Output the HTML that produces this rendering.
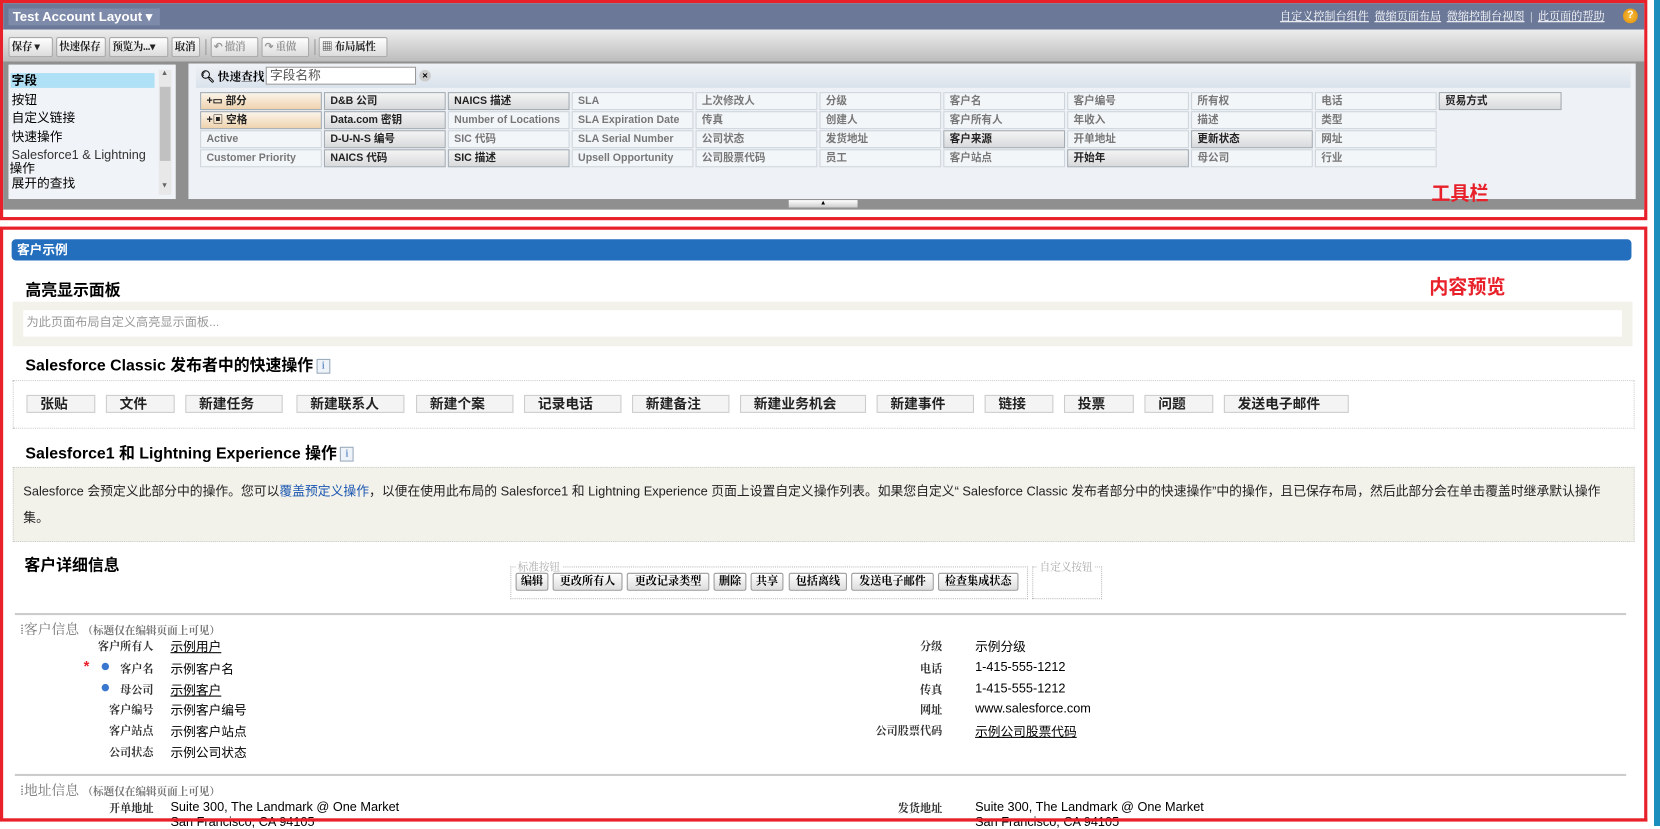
<!DOCTYPE html>
<html><head><meta charset="utf-8"><style>
*{margin:0;padding:0;box-sizing:border-box}
html,body{width:1660px;height:826px;overflow:hidden;background:#fff}
body{font-family:"Liberation Sans","Noto Sans CJK SC",sans-serif;color:#000}
#w{position:absolute;left:0;top:0;width:1568px;height:780px;transform:scale(1.0587);transform-origin:0 0}
.a{position:absolute}
.sr{font-family:"Liberation Serif","Noto Serif CJK SC",serif}
.cell{position:absolute;height:17px;border:1px solid #cdd5dc;background:#f3f6f9;font-size:10px;color:#777;line-height:15px;padding-left:5px;white-space:nowrap;overflow:hidden;font-weight:bold}
.cell.b{background:linear-gradient(#f4f4f4,#d8dadc);border-color:#a3acb3;color:#222}
.cell.o{background:linear-gradient(#fbf4ea,#efd3ae);border-color:#a3acb3;color:#222}
.tb{position:absolute;top:35px;height:19px;border:1px solid #aaa;background:linear-gradient(#fff,#dcdcdc);font-size:10px;line-height:17px;padding:0 2px;font-weight:bold;color:#222;border-radius:2px;font-family:"Liberation Serif","Noto Serif CJK SC",serif;white-space:nowrap;overflow:hidden;letter-spacing:-0.3px}
.qa{position:absolute;top:373px;height:17px;border:1px solid #ccc;background:#f4f4f4;font-size:13px;line-height:15px;padding-left:12px;font-weight:bold;color:#222}
.sb{position:absolute;top:541px;height:17px;border:1px solid #999;background:linear-gradient(#fff,#ddd);font-size:10.5px;line-height:15px;text-align:center;font-weight:bold;border-radius:2px;font-family:"Liberation Serif","Noto Serif CJK SC",serif;white-space:nowrap}
.lbl{position:absolute;font-size:10.5px;color:#333;text-align:right;font-family:"Liberation Serif","Noto Serif CJK SC",serif;font-weight:bold;width:130px}
.val{position:absolute;font-size:12px;color:#000}
.u{text-decoration:underline}
.hd{position:absolute;font-size:15px;font-weight:bold}
.info{display:inline-block;width:13px;height:14px;border:1px solid #9ab;background:#eef3fa;color:#2a62b0;font-size:10px;line-height:12px;text-align:center;vertical-align:2px;margin-left:3px;font-family:"Liberation Serif",serif;font-weight:normal}
</style></head><body>
<div class="a" style="left:1654px;top:0;width:6px;height:826px;background:#1a8fbd"></div>
<div id="w">
<div class="a" style="left:0;top:0;width:1556px;height:208px;border:3px solid #e8202a"></div>
<div class="a" style="left:3px;top:3px;width:1550px;height:25px;background:#6b7898"></div>
<div class="a" style="left:8px;top:8px;width:143px;height:16px;background:#7d8aaa;color:#fff;font-weight:bold;font-size:12.5px;line-height:16px;padding-left:4px">Test Account Layout ▾</div>
<div class="a sr" style="left:1209px;top:8px;color:#fff;font-size:10.5px;white-space:nowrap"><span class="u">自定义控制台组件</span>&nbsp;&nbsp;<span class="u">微缩页面布局</span>&nbsp;&nbsp;<span class="u">微缩控制台视图</span>&nbsp;&nbsp;|&nbsp;&nbsp;<span class="u">此页面的帮助</span></div>
<div class="a" style="left:1533px;top:8px;width:14px;height:14px;border-radius:50%;background:radial-gradient(#f8c040,#e08a00);color:#fff;font-size:10px;font-weight:bold;text-align:center;line-height:14px">?</div>
<div class="a" style="left:3px;top:28px;width:1550px;height:30px;background:linear-gradient(#ededed,#bdbdbd)"></div>
<div class="tb" style="left:8px;width:42px">保存 ▾</div>
<div class="tb" style="left:53px;width:47px">快速保存</div>
<div class="tb" style="left:103px;width:56px">预览为...▾</div>
<div class="tb" style="left:162px;width:27px">取消</div>
<div class="a" style="left:194px;top:37px;width:1px;height:15px;background:#999"></div>
<div class="tb" style="left:199px;width:45px;color:#999">↶ 撤消</div>
<div class="tb" style="left:247px;width:45px;color:#999">↷ 重做</div>
<div class="a" style="left:297px;top:37px;width:1px;height:15px;background:#999"></div>
<div class="tb" style="left:301px;width:65px">▦ 布局属性</div>
<div class="a" style="left:3px;top:58px;width:1550px;height:140px;background:#8f8f8f"></div>
<div class="a" style="left:8px;top:61px;width:158px;height:127px;background:#f0f3f7"></div>
<div class="a" style="left:150px;top:66px;width:12px;height:118px;background:#e8e8e8"></div>
<div class="a" style="left:151px;top:82px;width:10px;height:70px;background:#c1c1c1"></div>
<div class="a" style="left:152px;top:66px;font-size:7px;color:#666">▲</div>
<div class="a" style="left:152px;top:172px;font-size:7px;color:#666">▼</div>
<div class="a" style="left:10px;top:69px;width:136px;height:14px;background:#aee0f6"></div>
<div class="a" style="left:11px;top:68px;font-size:12px;line-height:17.5px;width:138px">
<b>字段</b><br>按钮<br>自定义链接<br>快速操作<br><span style="color:#333">Salesforce1 &amp; Lightning</span><br><span style="line-height:12px;display:block;margin-top:-3px;margin-left:-2px">操作</span>展开的查找</div>
<div class="a" style="left:178px;top:60px;width:1367px;height:128px;background:#eef1f5"></div>
<div class="a" style="left:185px;top:62px;width:1355px;height:21px;background:linear-gradient(#eef1f5,#d9e2ec)"></div>
<div class="a" style="left:189px;top:64px;font-size:11px;font-weight:bold">🔍︎<span class="sr"> 快速查找</span></div>
<div class="a" style="left:251px;top:63px;width:142px;height:17px;background:#fff;border:1px solid #999;font-size:12px;color:#555;padding-left:3px;line-height:15px">字段名称</div>
<div class="a" style="left:396px;top:66px;width:11px;height:11px;border-radius:50%;background:#ccc;font-size:9px;text-align:center;line-height:11px;font-weight:bold">×</div>
<div class="cell o" style="left:189px;top:87px;width:115px">+▭ 部分</div>
<div class="cell b" style="left:306px;top:87px;width:115px">D&amp;B 公司</div>
<div class="cell b" style="left:423px;top:87px;width:115px">NAICS 描述</div>
<div class="cell" style="left:540px;top:87px;width:115px">SLA</div>
<div class="cell" style="left:657px;top:87px;width:115px">上次修改人</div>
<div class="cell" style="left:774px;top:87px;width:115px">分级</div>
<div class="cell" style="left:891px;top:87px;width:115px">客户名</div>
<div class="cell" style="left:1008px;top:87px;width:115px">客户编号</div>
<div class="cell" style="left:1125px;top:87px;width:115px">所有权</div>
<div class="cell" style="left:1242px;top:87px;width:115px">电话</div>
<div class="cell b" style="left:1359px;top:87px;width:116px">贸易方式</div>
<div class="cell o" style="left:189px;top:105px;width:115px">+▣ 空格</div>
<div class="cell b" style="left:306px;top:105px;width:115px">Data.com 密钥</div>
<div class="cell" style="left:423px;top:105px;width:115px">Number of Locations</div>
<div class="cell" style="left:540px;top:105px;width:115px">SLA Expiration Date</div>
<div class="cell" style="left:657px;top:105px;width:115px">传真</div>
<div class="cell" style="left:774px;top:105px;width:115px">创建人</div>
<div class="cell" style="left:891px;top:105px;width:115px">客户所有人</div>
<div class="cell" style="left:1008px;top:105px;width:115px">年收入</div>
<div class="cell" style="left:1125px;top:105px;width:115px">描述</div>
<div class="cell" style="left:1242px;top:105px;width:115px">类型</div>
<div class="cell" style="left:189px;top:123px;width:115px">Active</div>
<div class="cell b" style="left:306px;top:123px;width:115px">D-U-N-S 编号</div>
<div class="cell" style="left:423px;top:123px;width:115px">SIC 代码</div>
<div class="cell" style="left:540px;top:123px;width:115px">SLA Serial Number</div>
<div class="cell" style="left:657px;top:123px;width:115px">公司状态</div>
<div class="cell" style="left:774px;top:123px;width:115px">发货地址</div>
<div class="cell b" style="left:891px;top:123px;width:115px">客户来源</div>
<div class="cell" style="left:1008px;top:123px;width:115px">开单地址</div>
<div class="cell b" style="left:1125px;top:123px;width:115px">更新状态</div>
<div class="cell" style="left:1242px;top:123px;width:115px">网址</div>
<div class="cell" style="left:189px;top:141px;width:115px">Customer Priority</div>
<div class="cell b" style="left:306px;top:141px;width:115px">NAICS 代码</div>
<div class="cell b" style="left:423px;top:141px;width:115px">SIC 描述</div>
<div class="cell" style="left:540px;top:141px;width:115px">Upsell Opportunity</div>
<div class="cell" style="left:657px;top:141px;width:115px">公司股票代码</div>
<div class="cell" style="left:774px;top:141px;width:115px">员工</div>
<div class="cell" style="left:891px;top:141px;width:115px">客户站点</div>
<div class="cell b" style="left:1008px;top:141px;width:115px">开始年</div>
<div class="cell" style="left:1125px;top:141px;width:115px">母公司</div>
<div class="cell" style="left:1242px;top:141px;width:115px">行业</div>
<div class="a" style="left:745px;top:189px;width:65px;height:7px;background:linear-gradient(#fff,#ccc);font-size:6px;text-align:center;line-height:7px">▲</div>
<div class="a" style="left:1352px;top:169px;color:#e8202a;font-size:18px;font-weight:bold">工具栏</div>
<div class="a" style="left:0;top:214px;width:1556px;height:562px;border:3px solid #e8202a"></div>
<div class="a" style="left:11px;top:226px;width:1530px;height:20px;background:#236fbd;border-radius:4px;color:#fff;font-size:12px;font-weight:bold;line-height:20px;padding-left:5px">客户示例</div>
<div class="a" style="left:1350px;top:257px;color:#e8202a;font-size:18px;font-weight:bold">内容预览</div>
<div class="hd" style="left:24px;top:263px">高亮显示面板</div>
<div class="a" style="left:12px;top:285px;width:1530px;height:42px;background:#f2f1ea"></div>
<div class="a" style="left:22px;top:293px;width:1510px;height:25px;background:#fff;color:#999;font-size:11.5px;line-height:25px;padding-left:3px">为此页面布局自定义高亮显示面板...</div>
<div class="hd" style="left:24px;top:334px">Salesforce Classic 发布者中的快速操作<span class="info">i</span></div>
<div class="a" style="left:12px;top:359px;width:1532px;height:46px;border:1px dotted #ccc"></div>
<div class="qa" style="left:25px;width:65px">张贴</div>
<div class="qa" style="left:100px;width:65px">文件</div>
<div class="qa" style="left:175px;width:92px">新建任务</div>
<div class="qa" style="left:280px;width:102px">新建联系人</div>
<div class="qa" style="left:393px;width:92px">新建个案</div>
<div class="qa" style="left:495px;width:92px">记录电话</div>
<div class="qa" style="left:597px;width:92px">新建备注</div>
<div class="qa" style="left:699px;width:119px">新建业务机会</div>
<div class="qa" style="left:828px;width:92px">新建事件</div>
<div class="qa" style="left:930px;width:65px">链接</div>
<div class="qa" style="left:1005px;width:66px">投票</div>
<div class="qa" style="left:1081px;width:65px">问题</div>
<div class="qa" style="left:1156px;width:118px">发送电子邮件</div>
<div class="hd" style="left:24px;top:417px">Salesforce1 和 Lightning Experience 操作<span class="info">i</span></div>
<div class="a" style="left:12px;top:441px;width:1532px;height:71px;background:#f2f1ea;border:1px dotted #ccc"></div>
<div class="a" style="left:22px;top:452px;font-size:12.1px;line-height:25px;color:#222;white-space:nowrap">Salesforce 会预定义此部分中的操作。您可以<span style="color:#1a56b0">覆盖预定义操作</span>，以便在使用此布局的 Salesforce1 和 Lightning Experience 页面上设置自定义操作列表。如果您自定义“ Salesforce Classic 发布者部分中的快速操作”中的操作，且已保存布局，然后此部分会在单击覆盖时继承默认操作<br>集。</div>
<div class="hd" style="left:23px;top:523px">客户详细信息</div>
<div class="a" style="left:482px;top:535px;width:489px;height:31px;border:1px dotted #bbb"></div>
<div class="a sr" style="left:487px;top:527px;font-size:10px;color:#aaa;background:#fff;padding:0 2px">标准按钮</div>
<div class="a" style="left:975px;top:535px;width:66px;height:31px;border:1px dotted #bbb"></div>
<div class="a sr" style="left:980px;top:527px;font-size:10px;color:#aaa;background:#fff;padding:0 2px">自定义按钮</div>
<div class="sb" style="left:487px;width:31px">编辑</div>
<div class="sb" style="left:522px;width:66px">更改所有人</div>
<div class="sb" style="left:592px;width:78px">更改记录类型</div>
<div class="sb" style="left:674px;width:31px">删除</div>
<div class="sb" style="left:709px;width:31px">共享</div>
<div class="sb" style="left:745px;width:55px">包括离线</div>
<div class="sb" style="left:804px;width:78px">发送电子邮件</div>
<div class="sb" style="left:886px;width:76px">检查集成状态</div>
<div class="a" style="left:14px;top:579px;width:1522px;height:2px;background:#ccc"></div>
<div class="a sr" style="left:19px;top:584px;font-size:13px;color:#777;white-space:nowrap">⁞客户信息 <b style="font-size:10px">（标题仅在编辑页面上可见）</b></div>
<div class="lbl" style="left:15px;top:603px">客户所有人</div><div class="val u" style="left:161px;top:602px">示例用户</div>
<div class="a" style="left:79px;top:621px;color:#e8202a;font-size:14px;font-weight:bold">*</div>
<div class="a" style="left:96px;top:626px;width:7px;height:7px;border-radius:50%;background:#3a78d0"></div>
<div class="a" style="left:96px;top:646px;width:7px;height:7px;border-radius:50%;background:#3a78d0"></div>
<div class="lbl" style="left:15px;top:624px">客户名</div><div class="val" style="left:161px;top:623px">示例客户名</div>
<div class="lbl" style="left:15px;top:644px">母公司</div><div class="val u" style="left:161px;top:643px">示例客户</div>
<div class="lbl" style="left:15px;top:663px">客户编号</div><div class="val" style="left:161px;top:662px">示例客户编号</div>
<div class="lbl" style="left:15px;top:683px">客户站点</div><div class="val" style="left:161px;top:682px">示例客户站点</div>
<div class="lbl" style="left:15px;top:703px">公司状态</div><div class="val" style="left:161px;top:702px">示例公司状态</div>
<div class="lbl" style="left:760px;top:603px">分级</div><div class="val" style="left:921px;top:602px">示例分级</div>
<div class="lbl" style="left:760px;top:624px">电话</div><div class="val" style="left:921px;top:623px">1-415-555-1212</div>
<div class="lbl" style="left:760px;top:644px">传真</div><div class="val" style="left:921px;top:643px">1-415-555-1212</div>
<div class="lbl" style="left:760px;top:663px">网址</div><div class="val" style="left:921px;top:662px">www.salesforce.com</div>
<div class="lbl" style="left:760px;top:683px">公司股票代码</div><div class="val u" style="left:921px;top:682px">示例公司股票代码</div>
<div class="a" style="left:14px;top:731px;width:1522px;height:2px;background:#ccc"></div>
<div class="a sr" style="left:19px;top:736px;font-size:13px;color:#777;white-space:nowrap">⁞地址信息 <b style="font-size:10px">（标题仅在编辑页面上可见）</b></div>
<div class="lbl" style="left:15px;top:756px">开单地址</div><div class="val" style="left:161px;top:755px;line-height:14px">Suite 300, The Landmark @ One Market<br>San Francisco, CA 94105</div>
<div class="lbl" style="left:760px;top:756px">发货地址</div><div class="val" style="left:921px;top:755px;line-height:14px">Suite 300, The Landmark @ One Market<br>San Francisco, CA 94105</div>
<div class="a" style="left:0;top:773px;width:1556px;height:3px;background:#e8202a"></div>
</div>
</body></html>
